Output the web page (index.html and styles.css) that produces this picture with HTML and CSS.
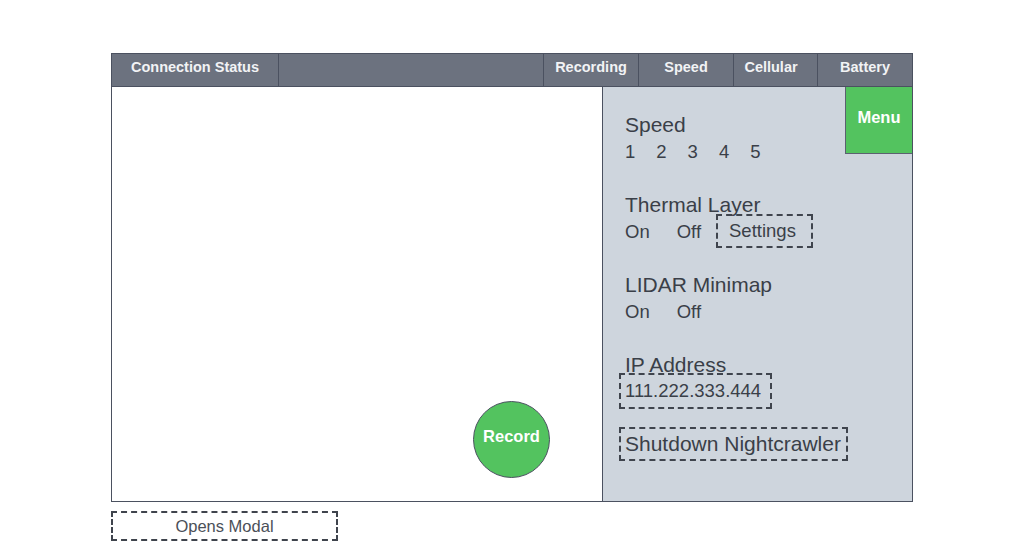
FILE: index.html
```html
<!DOCTYPE html>
<html>
<head>
<meta charset="utf-8">
<link rel="stylesheet" href="styles.css">
</head>
<body>
<div class="page">
  <div class="frame">
    <div class="header">
      <div class="cell c-conn">Connection Status</div>
      <div class="cell c-spacer"></div>
      <div class="cell c-rec">Recording</div>
      <div class="cell c-speed">Speed</div>
      <div class="cell c-cell">Cellular</div>
      <div class="cell c-bat">Battery</div>
    </div>
    <div class="body">
      <div class="view">
        <div class="record">Record</div>
      </div>
      <div class="panel">
        <div class="menu">Menu</div>
        <div class="section">
          <div class="label">Speed</div>
          <div class="opts nums"><span>1</span><span>2</span><span>3</span><span>4</span><span>5</span></div>
        </div>
        <div class="section">
          <div class="label">Thermal Layer</div>
          <div class="opts onoff"><span>On</span><span>Off</span><span class="dash settings">Settings</span></div>
        </div>
        <div class="section">
          <div class="label">LIDAR Minimap</div>
          <div class="opts onoff"><span>On</span><span>Off</span></div>
        </div>
        <div class="section">
          <div class="label">IP Address</div>
          <div class="opts"><span class="dash ip">111.222.333.444</span></div>
        </div>
        <div class="shutdown-row"><span class="dash shutdown">Shutdown Nightcrawler</span></div>
      </div>
    </div>
  </div>
  <div class="modal-note">Opens Modal</div>
</div>
</body>
</html>
```

FILE: styles.css
```css
* { box-sizing: border-box; }
html, body { margin: 0; padding: 0; background: #ffffff; }
body { font-family: "Liberation Sans", Arial, sans-serif; color: #3a3f48; }

.page { padding: 53px 0 0 111px; width: 1024px; height: 554px; }

.frame {
  width: 802px;
  height: 449px;
  border: 1px solid #4b5160;
  display: flex;
  flex-direction: column;
}

.header {
  display: flex;
  height: 33px;
  background: #6c727f;
  border-bottom: 1px solid #4b5160;
  flex-shrink: 0;
}
.cell {
  color: #f2f3f5;
  font-weight: bold;
  font-size: 14.5px;
  display: flex;
  align-items: center;
  justify-content: center;
  border-right: 1px solid #4b5160;
  padding-bottom: 6px;
}
.c-conn { width: 167px; }
.c-spacer { width: 265px; }
.c-rec { width: 95px; }
.c-speed { width: 95px; }
.c-cell { width: 84px; padding-right: 9px; }
.c-bat { flex: 1; border-right: none; }

.body { flex: 1; display: flex; }

.view {
  flex: 1;
  background: #ffffff;
  display: flex;
  align-items: flex-end;
  justify-content: flex-end;
  padding: 0 52px 23px 0;
}
.record {
  width: 77px;
  height: 77px;
  border-radius: 50%;
  background: #53c35f;
  border: 1px solid #4b5160;
  color: #ffffff;
  font-weight: bold;
  font-size: 16.5px;
  display: flex;
  align-items: center;
  justify-content: center;
  padding-bottom: 6px;
}

.panel {
  width: 310px;
  background: #ced5dd;
  border-left: 1px solid #4b5160;
  position: relative;
  padding: 25px 0 0 22px;
}
.menu {
  position: absolute;
  top: 0;
  right: 0;
  width: 67px;
  height: 67px;
  background: #53c35f;
  border-left: 1px solid #5b6170;
  border-bottom: 1px solid #5b6170;
  color: #ffffff;
  font-weight: bold;
  font-size: 16.5px;
  text-align: center;
  padding-top: 21px;
}

.section { margin-bottom: 27px; }
.label { font-size: 21px; line-height: 26px; }
.opts { font-size: 18.5px; line-height: 26px; display: flex; align-items: center; height: 26px; margin-top: 1px; }
.nums { gap: 21px; }
.onoff { gap: 27px; }

.dash { border: 2px dashed #3f444d; }
.settings {
  margin-left: -12px;
  padding: 0 15px 0 11px;
  height: 34px;
  line-height: 30px;
  position: relative;
  top: -1px;
}
.ip {
  margin-left: -6px;
  padding: 0 9px 0 4px;
  height: 36px;
  line-height: 32px;
  position: relative;
  top: -1px;
}
.shutdown-row { margin-top: -5px; margin-left: -6px; }
.shutdown {
  display: inline-block;
  font-size: 21px;
  height: 34px;
  line-height: 30px;
  padding: 0 5px 0 4px;
}

.modal-note {
  margin-top: 9px;
  width: 227px;
  height: 30px;
  border: 2px dashed #3f444d;
  font-size: 16.5px;
  color: #4b5058;
  text-align: center;
  line-height: 26px;
}
```
